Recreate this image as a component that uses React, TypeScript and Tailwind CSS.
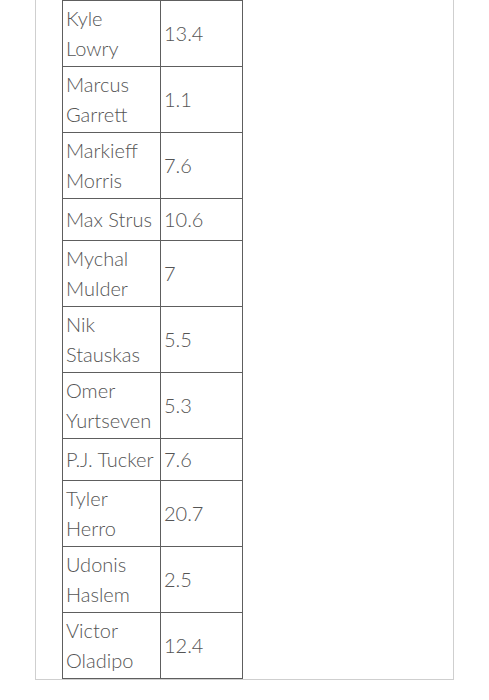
const rows: [string, string, boolean][] = [
  ["Kyle Lowry", "13.4", true],
  ["Marcus Garrett", "1.1", true],
  ["Markieff Morris", "7.6", true],
  ["Max Strus", "10.6", false],
  ["Mychal Mulder", "7", true],
  ["Nik Stauskas", "5.5", true],
  ["Omer Yurtseven", "5.3", true],
  ["P.J. Tucker", "7.6", false],
  ["Tyler Herro", "20.7", true],
  ["Udonis Haslem", "2.5", true],
  ["Victor Oladipo", "12.4", true],
];

export default function App() {
  return (
    <div className="h-[700px] w-[489px] bg-white font-['Lato',sans-serif] text-[20px] font-light leading-[30px] text-[#555]">
      <div className="ml-[35px] h-[680px] w-[419px] border-x border-b border-[#cfcfcf] pl-[26px]">
        <table className="w-[180px] table-fixed border-collapse">
          <colgroup>
            <col className="w-[98px]" />
            <col className="w-[82px]" />
          </colgroup>
          <tbody>
            {rows.map(([name, pts, tall]) => (
              <tr key={name} className={tall ? "h-[66px]" : "h-[42px]"}>
                <td className="border border-[#5e5e5e] pb-px pl-[3px] align-middle">{name}</td>
                <td className="border border-[#5e5e5e] pb-px pl-[3px] align-middle">{pts}</td>
              </tr>
            ))}
          </tbody>
        </table>
      </div>
    </div>
  );
}
